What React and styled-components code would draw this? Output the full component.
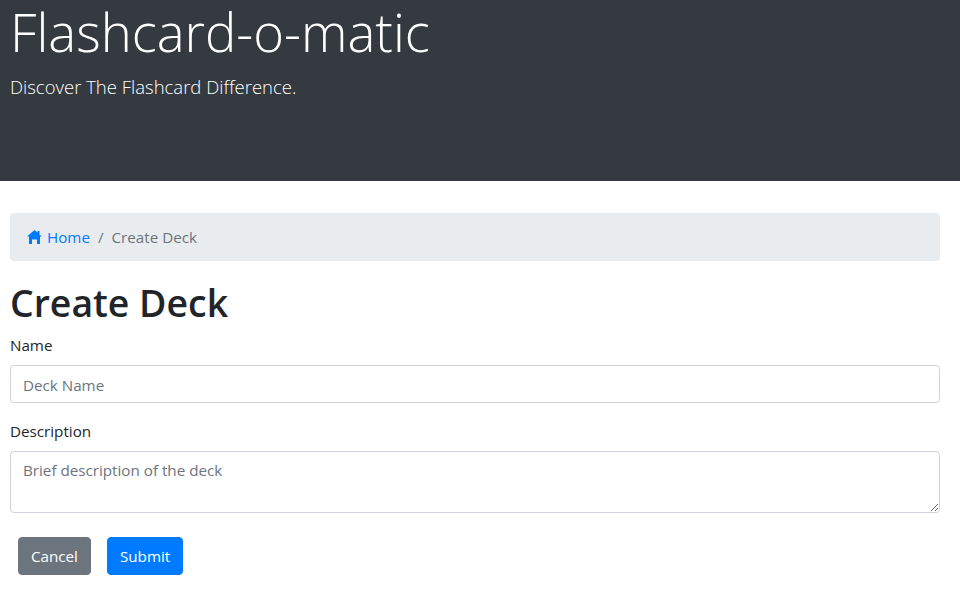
import React from "react";
import styled, { createGlobalStyle } from "styled-components";

const Global = createGlobalStyle`
  * { box-sizing: border-box; }
  html, body { margin: 0; padding: 0; background: #fff; }
  body { font-family: "Open Sans", "Noto Sans", sans-serif; font-size: 15.2px; line-height: 24px; color: #212529; }
  ::placeholder { color: #6c757d; opacity: 1; }
`;

const Hero = styled.header`
  height: 181px;
  background: #343a40;
  color: #fff;
  padding: 0 10px;
`;
const Title = styled.h1`
  margin: 0;
  font-size: 52.6px;
  font-weight: 300;
  line-height: 64px;
`;
const Lead = styled.p`
  margin: 8px 0 0;
  font-size: 18.5px;
  font-weight: 350;
  line-height: 30px;
`;
const Main = styled.main`
  padding: 32px 20px 0 10px;
`;
const Crumbs = styled.nav`
  display: flex;
  align-items: center;
  height: 48px;
  padding: 0 17px;
  background: #e9ecef;
  border-radius: 4px;
  margin-bottom: 18px;
`;
const CrumbLink = styled.a`
  display: inline-flex;
  align-items: center;
  gap: 5px;
  color: #007bff;
`;
const Sep = styled.span`
  color: #6c757d;
  padding: 0 8px;
`;
const Current = styled.span`
  color: #6c757d;
`;
const Heading = styled.h2`
  margin: 0 0 6px;
  font-size: 37.4px;
  font-weight: 600;
  line-height: 48px;
`;
const Field = styled.div`
  margin-bottom: 16px;
`;
const Label = styled.label`
  display: block;
  margin-bottom: 8px;
`;
const Input = styled.input`
  display: block;
  width: 100%;
  height: 38px;
  padding: 7px 12px 5px;
  font: inherit;
  color: #495057;
  border: 1px solid #ced4da;
  border-radius: 4px;
`;
const Area = styled.textarea`
  display: block;
  width: 100%;
  height: 62px;
  padding: 6px 12px;
  font: inherit;
  color: #495057;
  border: 1px solid #ced4da;
  border-radius: 4px;
`;
const Actions = styled.div`
  display: flex;
  gap: 16px;
  padding: 8px 8px 0;
`;
const Button = styled.button`
  height: 38px;
  padding: 6px 12px;
  font: inherit;
  color: #fff;
  background: ${p => (p.$primary ? "#007bff" : "#6c757d")};
  border: 1px solid ${p => (p.$primary ? "#007bff" : "#6c757d")};
  border-radius: 4px;
`;

const HomeIcon = () => (
  <svg width="15" height="14" viewBox="0 0 15 14" fill="currentColor" aria-hidden="true">
    <path fillRule="evenodd" d="M7.5 0 10.5 2.6V1h2v3.4L15 6.5h-2V14H10V9.5H5V14H2V6.5H0z" />
  </svg>
);

export default function App() {
  return (
    <>
      <Global />
      <Hero>
        <Title>Flashcard-o-matic</Title>
        <Lead>Discover The Flashcard Difference.</Lead>
      </Hero>
      <Main>
        <Crumbs>
          <CrumbLink><HomeIcon />Home</CrumbLink>
          <Sep>/</Sep>
          <Current>Create Deck</Current>
        </Crumbs>
        <Heading>Create Deck</Heading>
        <Field>
          <Label>Name</Label>
          <Input placeholder="Deck Name" />
        </Field>
        <Field>
          <Label>Description</Label>
          <Area placeholder="Brief description of the deck" />
        </Field>
        <Actions>
          <Button>Cancel</Button>
          <Button $primary>Submit</Button>
        </Actions>
      </Main>
    </>
  );
}
